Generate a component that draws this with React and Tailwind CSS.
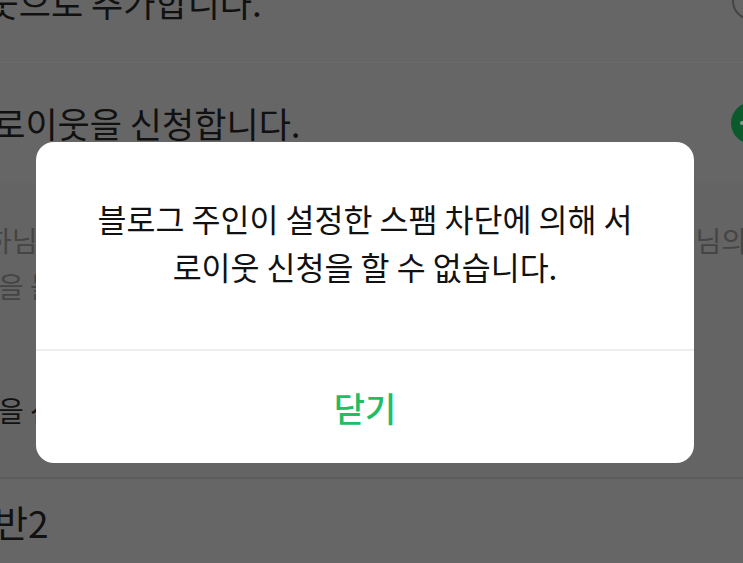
import React from "react";

const font = { fontFamily: '"Noto Sans CJK KR", "Noto Sans", sans-serif' };

const Background = () => {
    return (
        <div className="flex flex-col">
            {/* 이웃 추가 row, cut at the top */}
            <div className="flex h-[62px] items-start">
                <p className="-ml-[110px] -mt-[20px] text-[35px] leading-[44px] text-[#111] whitespace-nowrap">
                    서로이웃으로 추가합니다.
                </p>
                <div className="ml-auto -mr-[27px] -mt-[18px] h-[38px] w-[38px] shrink-0 rounded-full border-2 border-[#444]" />
            </div>
            <div className="h-px bg-[#6b6b6b]" />

            {/* 서로이웃 신청 row */}
            <div className="flex h-[120px] items-center">
                <p className="-ml-[39px] text-[35px] leading-[44px] text-[#111] whitespace-nowrap">
                    서로이웃을 신청합니다.
                </p>
                <div className="ml-auto -mr-[30px] flex h-[42px] w-[42px] shrink-0 items-center justify-start rounded-full bg-[#0b5a2c] pl-[9px]">
                    <span className="block h-[4px] w-[4px] rounded-full bg-[#8a9a90]" />
                </div>
            </div>

            {/* 안내 문구 */}
            <div className="flex h-[294px] flex-col bg-[#646464] pt-[34px]">
                <div className="flex justify-between text-[28px] leading-[46px] text-[#454545] whitespace-nowrap">
                    <span className="-ml-[14px]">하님이 서로이웃 신청을 수락하면</span>
                    <span className="-mr-[4px]">이웃님의</span>
                </div>
                <div className="text-[28px] leading-[46px] text-[#454545] whitespace-nowrap">
                    <span className="-ml-[2px] block">을 볼 수 있습니다.</span>
                </div>
                <div className="mt-[78px] text-[28px] leading-[46px] text-[#111] whitespace-nowrap">
                    <span className="-ml-[2px] block">을 선택해 주세요.</span>
                </div>
            </div>
            <div className="h-[2px] bg-[#5c5c5c]" />

            {/* 그룹 */}
            <div className="flex h-[90px] items-center">
                <p className="-ml-[6px] -mt-[4px] text-[37px] leading-[44px] text-[#111] whitespace-nowrap">반2</p>
            </div>
        </div>
    );
};

const App = () => {
    return (
        <div className="relative h-[563px] w-[743px] overflow-hidden bg-[#666666]" style={font}>
            <Background />

            {/* Alert dialog */}
            <div className="absolute left-[36px] top-[142px] flex h-[321px] w-[658px] flex-col rounded-[18px] bg-white">
                <div className="flex h-[207px] items-center justify-center pb-[8px] text-center">
                    <p className="text-[31.5px] leading-[48px] text-[#111]">
                        블로그 주인이 설정한 스팸 차단에 의해 서<br />
                        로이웃 신청을 할 수 없습니다.
                    </p>
                </div>
                <div className="h-[2px] bg-[#eeeeee]" />
                <button className="flex flex-1 items-center justify-center text-[34px] font-medium text-[#1fbd64]">
                    닫기
                </button>
            </div>
        </div>
    );
};

export default App;
